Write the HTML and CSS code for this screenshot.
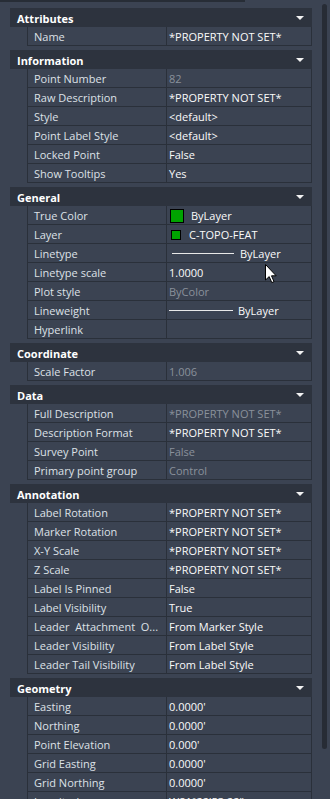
FILE: index.html
```html
<!DOCTYPE html>
<html>
<head>
    <title>Properties</title>
    <link rel="stylesheet" href="styles.css">
</head>
<body>
    <div class="topbar"></div>
    <div class="panel">
        <div class="props">
            <div class="group">
                <div class="group-head"><span>Attributes</span><span class="caret"></span></div>
                <div class="row"><div class="label">Name</div><div class="value">*PROPERTY NOT SET*</div></div>
            </div>

            <div class="group">
                <div class="group-head"><span>Information</span><span class="caret"></span></div>
                <div class="row"><div class="label">Point Number</div><div class="value dim">82</div></div>
                <div class="row"><div class="label">Raw Description</div><div class="value">*PROPERTY NOT SET*</div></div>
                <div class="row"><div class="label">Style</div><div class="value">&lt;default&gt;</div></div>
                <div class="row"><div class="label">Point Label Style</div><div class="value">&lt;default&gt;</div></div>
                <div class="row"><div class="label">Locked Point</div><div class="value">False</div></div>
                <div class="row"><div class="label">Show Tooltips</div><div class="value">Yes</div></div>
            </div>

            <div class="group">
                <div class="group-head"><span>General</span><span class="caret"></span></div>
                <div class="row"><div class="label">True Color</div><div class="value"><span class="swatch big"></span>ByLayer</div></div>
                <div class="row"><div class="label">Layer</div><div class="value"><span class="swatch small"></span>C-TOPO-FEAT</div></div>
                <div class="row"><div class="label">Linetype</div><div class="value"><span class="line lt"></span>ByLayer</div></div>
                <div class="row"><div class="label">Linetype scale</div><div class="value">1.0000</div></div>
                <div class="row"><div class="label">Plot style</div><div class="value dim">ByColor</div></div>
                <div class="row"><div class="label">Lineweight</div><div class="value"><span class="line lw"></span>ByLayer</div></div>
                <div class="row"><div class="label">Hyperlink</div><div class="value"></div></div>
            </div>

            <div class="group">
                <div class="group-head"><span>Coordinate</span><span class="caret"></span></div>
                <div class="row"><div class="label">Scale Factor</div><div class="value dim">1.006</div></div>
            </div>

            <div class="group">
                <div class="group-head"><span>Data</span><span class="caret"></span></div>
                <div class="row"><div class="label">Full Description</div><div class="value dim">*PROPERTY NOT SET*</div></div>
                <div class="row"><div class="label">Description Format</div><div class="value">*PROPERTY NOT SET*</div></div>
                <div class="row"><div class="label">Survey Point</div><div class="value dim">False</div></div>
                <div class="row"><div class="label">Primary point group</div><div class="value dim">Control</div></div>
            </div>

            <div class="group">
                <div class="group-head"><span>Annotation</span><span class="caret"></span></div>
                <div class="row"><div class="label">Label Rotation</div><div class="value">*PROPERTY NOT SET*</div></div>
                <div class="row"><div class="label">Marker Rotation</div><div class="value">*PROPERTY NOT SET*</div></div>
                <div class="row"><div class="label">X-Y Scale</div><div class="value">*PROPERTY NOT SET*</div></div>
                <div class="row"><div class="label">Z Scale</div><div class="value">*PROPERTY NOT SET*</div></div>
                <div class="row"><div class="label">Label Is Pinned</div><div class="value">False</div></div>
                <div class="row"><div class="label">Label Visibility</div><div class="value">True</div></div>
                <div class="row"><div class="label">Leader&nbsp; Attachment&nbsp; O...</div><div class="value">From Marker Style</div></div>
                <div class="row"><div class="label">Leader Visibility</div><div class="value">From Label Style</div></div>
                <div class="row"><div class="label">Leader Tail Visibility</div><div class="value">From Label Style</div></div>
            </div>

            <div class="group">
                <div class="group-head"><span>Geometry</span><span class="caret"></span></div>
                <div class="row"><div class="label">Easting</div><div class="value">0.0000'</div></div>
                <div class="row"><div class="label">Northing</div><div class="value">0.0000'</div></div>
                <div class="row"><div class="label">Point Elevation</div><div class="value">0.000'</div></div>
                <div class="row"><div class="label">Grid Easting</div><div class="value">0.0000'</div></div>
                <div class="row"><div class="label">Grid Northing</div><div class="value">0.0000'</div></div>
                <div class="row"><div class="label">Longitude</div><div class="value">W81°22'53.22"</div></div>
            </div>
        </div>
        <div class="scroll"></div>
    </div>

    <!-- mouse pointer hovering the grid -->
    <svg class="cursor" width="13" height="20" viewBox="0 0 13 20">
        <path d="M0.5 0.5 L0.5 16 L4.2 12.6 L6.8 18.6 L9 17.6 L6.5 11.8 L11.2 11.8 Z" fill="#fff" stroke="#000" stroke-width="1"/>
    </svg>
</body>
</html>
```

FILE: styles.css
```css
body { margin: 0; height: 799px; overflow: hidden; background: #3b4352; font-family: "Open Sans", "Noto Sans", sans-serif; font-size: 11px; color: #dde1e7; position: relative; }
.topbar { height: 2px; width: 245px; background: #272d36; }
.panel { display: flex; padding: 2px 0 0 10px; }
.props { width: 302px; padding-top: 4px; }
.scroll { margin-left: 10px; width: 5px; height: 745px; border-radius: 3px; background: #272c35; }

.group { margin-bottom: 4px; }
.group-head { height: 19px; padding: 1px 8px 0 7px; box-sizing: border-box; background: #2d333e; display: flex; align-items: center; justify-content: space-between; font-weight: bold; color: #fff; }
.caret { width: 0; height: 0; margin-top: -1px; border-left: 4px solid transparent; border-right: 4px solid transparent; border-top: 4px solid #f2f2f2; }

.row { margin-left: 17px; height: 18px; display: grid; grid-template-columns: 139px 1fr; border: 1px solid #2a303a; border-top: none; }
.label { padding: 1px 0 0 6px; border-right: 1px solid #2a303a; line-height: 17px; white-space: nowrap; overflow: hidden; }
.value { padding: 1px 0 0 2px; line-height: 17px; color: #fafafa; white-space: nowrap; display: flex; align-items: center; }
.value.dim { color: #8a919b; }

.swatch { display: inline-block; background: #00a300; border: 1px solid #000; box-sizing: border-box; }
.swatch.big { width: 14px; height: 14px; margin: 0 7px 0 1px; }
.swatch.small { width: 10px; height: 10px; margin: 0 8px 0 2px; }
.line { display: inline-block; height: 1px; background: #e8e8e8; }
.line.lt { width: 62px; margin: 0 6px 0 3px; }
.line.lw { width: 64px; margin: 0 5px 0 0; }

.cursor { position: absolute; left: 265px; top: 264px; }
```
